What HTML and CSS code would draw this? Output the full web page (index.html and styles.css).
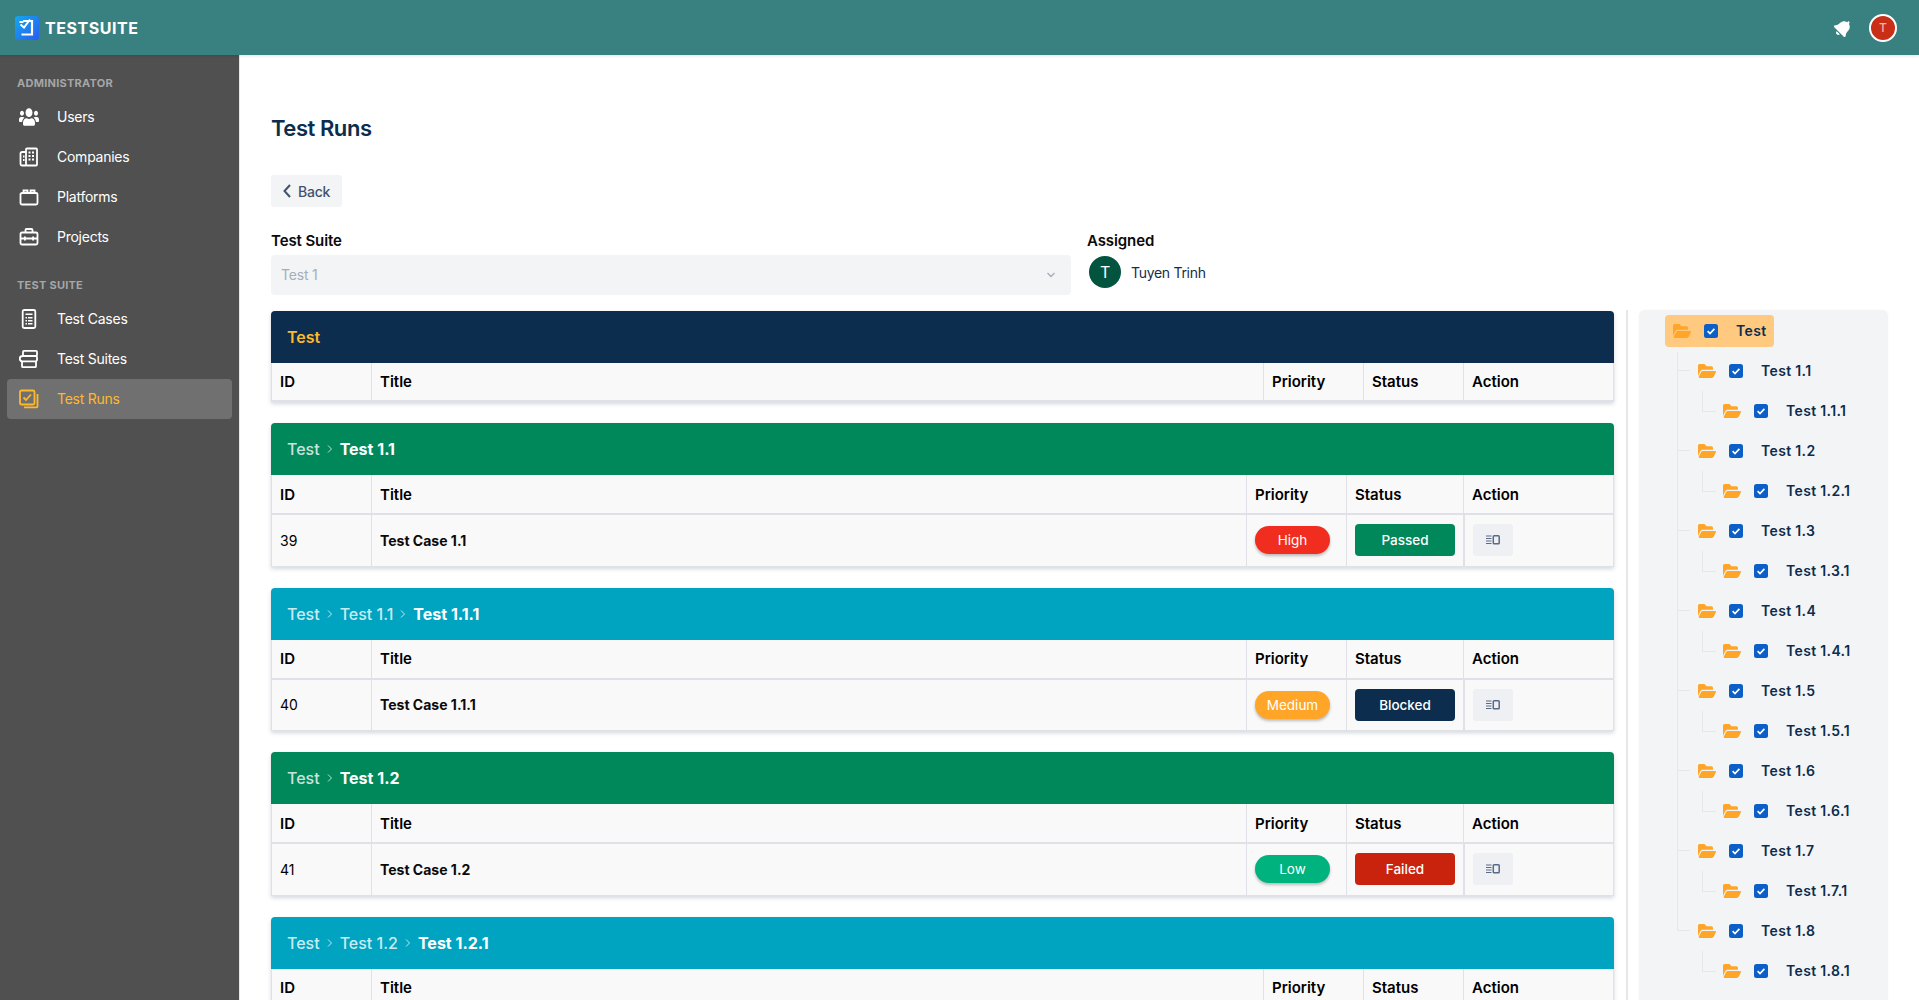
FILE: index.html
```html
<!DOCTYPE html>
<html lang="en">
<head>
<meta charset="utf-8">
<title>Test Runs</title>
<link rel="stylesheet" href="styles.css">
</head>
<body>
<svg class="defs" width="0" height="0">
  <defs>
    <symbol id="folder" viewBox="0 64 576 384" preserveAspectRatio="none"><path fill="currentColor" d="M572.694 292.093L500.27 416.248A63.997 63.997 0 0 1 444.989 448H45.025c-18.523 0-30.064-20.093-20.731-36.093l72.424-124.155A64 64 0 0 1 152 256h399.964c18.523 0 30.064 20.093 20.73 36.093zM152 224h328v-48c0-26.51-21.49-48-48-48H272l-64-64H48C21.49 64 0 85.49 0 112v278.046l69.077-118.418C86.214 242.25 117.989 224 152 224z"/></symbol>
    <symbol id="check" viewBox="0 0 14 14"><rect width="14" height="14" rx="2.5" fill="#0b5fc6"/><path d="M3.6 7.2l2.4 2.3 4.4-4.6" fill="none" stroke="#fff" stroke-width="1.7"/></symbol>
    <symbol id="panel" viewBox="0 0 14 10"><path d="M0 1h5.5M0 3.5h5.5M0 6h5.5M0 8.5h5.5" stroke="currentColor" stroke-width="1.1"/><rect x="7.3" y=".8" width="5.9" height="7.9" rx=".8" fill="none" stroke="currentColor" stroke-width="1.5"/></symbol>
    <symbol id="chev" viewBox="0 0 8 10"><path d="M2 1.500L5.500 5 2 8.500" fill="none" stroke="currentColor" stroke-width="1"/></symbol>
  </defs>
</svg>
<header class="topbar">
  <div class="brand">
    <svg class="logo" viewBox="0 0 24 24"><defs><linearGradient id="lg" x1="0" y1="0" x2="1" y2="1"><stop offset="0" stop-color="#13a8ef"/><stop offset="1" stop-color="#2a5cf0"/></linearGradient></defs><rect width="24" height="24" rx="3" fill="url(#lg)"/><path d="M8 5h9v13.500H6.500" fill="none" stroke="#fff" stroke-width="2.200"/><path d="M4.500 6h4M5.500 8.500l3.500 3 6-8" fill="none" stroke="#fff" stroke-width="2"/></svg>
    <span class="brand-name">TESTSUITE</span>
  </div>
  <div class="top-actions">
    <svg class="bell" viewBox="0 0 448 512"><path fill="#fff" d="M224 512c35.32 0 63.97-28.65 63.97-64H160.03c0 35.35 28.65 64 63.97 64zm215.39-149.71c-19.32-20.76-55.47-51.99-55.47-154.29 0-77.7-54.48-139.9-127.94-155.16V32c0-17.67-14.32-32-31.98-32s-31.98 14.33-31.98 32v20.84C118.56 68.1 64.08 130.3 64.08 208c0 102.3-36.15 133.53-55.47 154.29-6 6.45-8.66 14.16-8.61 21.71.11 16.4 12.98 32 32.1 32h383.8c19.12 0 32-15.6 32.1-32 .05-7.55-2.61-15.27-8.61-21.71z"/></svg>
    <div class="me">T</div>
  </div>
</header>
<div class="shell">
  <aside class="sidebar">
    <div class="nav-title">Administrator</div>
    <a class="nav-item"><svg class="nav-icon nav-icon-users" viewBox="0 25 640 460" preserveAspectRatio="none"><path fill="currentColor" d="M96 224c35.300 0 64-28.700 64-64s-28.700-64-64-64-64 28.700-64 64 28.700 64 64 64zm448 0c35.300 0 64-28.700 64-64s-28.700-64-64-64-64 28.700-64 64 28.700 64 64 64zm32 32h-64c-17.600 0-33.500 7.100-45.100 18.600 40.300 22.100 68.900 62 75.100 109.400h66c17.700 0 32-14.300 32-32v-32c0-35.300-28.700-64-64-64zm-256 0c61.900 0 112-50.100 112-112S381.900 32 320 32 208 82.100 208 144s50.100 112 112 112zm76.800 32h-8.300c-20.800 10-43.900 16-68.500 16s-47.600-6-68.500-16h-8.300C179.600 288 128 339.600 128 403.200V432c0 26.500 21.500 48 48 48h288c26.500 0 48-21.500 48-48v-28.800c0-63.600-51.600-115.200-115.200-115.200zm-223.700-13.400C161.500 263.100 145.600 256 128 256H64c-35.300 0-64 28.700-64 64v32c0 17.700 14.300 32 32 32h65.900c6.300-47.400 34.900-87.300 75.200-109.400z"/></svg>Users</a>
    <a class="nav-item"><svg class="nav-icon" viewBox="0 0 20 20"><g fill="none" stroke="currentColor" stroke-width="1.800"><rect x="7" y="1.500" width="11" height="17" rx="1"/><path d="M7 5H3a1.500 1.500 0 0 0-1.500 1.500V17A1.500 1.500 0 0 0 3 18.500h4"/></g><path d="M9.500 4.500h2v2h-2zM13 4.500h2v2h-2zM9.500 8h2v2h-2zM13 8h2v2h-2zM9.500 11.500h2v2h-2zM13 11.500h2v2h-2zM4 8.500h1.500v2H4zM4 12h1.500v2H4z" fill="currentColor"/></svg>Companies</a>
    <a class="nav-item"><svg class="nav-icon" viewBox="0 0 20 20"><g fill="none" stroke="currentColor" stroke-width="1.800"><rect x="1.500" y="6" width="17" height="11.500" rx="1.500"/><path d="M4.500 6V3.500h4V6M11.500 6V3.500h4V6"/></g></svg>Platforms</a>
    <a class="nav-item"><svg class="nav-icon" viewBox="0 0 20 20"><g fill="none" stroke="currentColor" stroke-width="1.800"><rect x="1.500" y="5.500" width="17" height="12" rx="1.500"/><path d="M6.500 5.500V3a1 1 0 0 1 1-1h5a1 1 0 0 1 1 1v2.500M1.500 11.500h4M14.500 11.500h4M6 11.500h8"/></g><path d="M5 9.500h1.800v4H5zM13.200 9.500H15v4h-1.800z" fill="currentColor"/></svg>Projects</a>
    <div class="nav-title nav-title-second">Test Suite</div>
    <a class="nav-item"><svg class="nav-icon" viewBox="0 0 20 20"><rect x="3.700" y="1" width="12.600" height="18" rx="1.500" fill="none" stroke="currentColor" stroke-width="1.800"/><path d="M6.500 4.500h7v1.500h-7zM6.500 8h1.500v1.500H6.500zM9 8h4.500v1.500H9zM6.500 11h1.500v1.500H6.500zM9 11h4.500v1.500H9zM6.500 14h1.500v1.500H6.500zM9 14h4.500v1.500H9z" fill="currentColor"/></svg>Test Cases</a>
    <a class="nav-item"><svg class="nav-icon" viewBox="0 0 20 20"><g fill="none" stroke="currentColor" stroke-width="1.800"><path d="M4 7V2.800a1 1 0 0 1 1-1h12a1 1 0 0 1 1 1V6a1 1 0 0 1-1 1"/><path d="M17.500 7H3.500a2.700 2.700 0 0 0 0 5.400h14M17 7a2.700 2.700 0 0 1 1 2.700 2.700 2.700 0 0 1-1 2.700"/><path d="M3 12.400v4.800a1 1 0 0 0 1 1h12a1 1 0 0 0 1-1v-4.800"/></g></svg>Test Suites</a>
    <a class="nav-item nav-item-active"><svg class="nav-icon" viewBox="0 0 20 20"><g fill="none" stroke="currentColor" stroke-width="1.800"><rect x="1" y="1.500" width="14.500" height="14" rx="1.500"/><path d="M18.500 5v12.300a1 1 0 0 1-1 1H5"/><path d="M4.500 8.500l2.500 2.500 5-5.500"/></g></svg>Test Runs</a>
  </aside>
  <main class="content">
    <h1 class="page-title">Test Runs</h1>
    <a class="back"><svg class="back-icon" viewBox="0 0 10 16"><path d="M8 2L2.500 8 8 14" fill="none" stroke="currentColor" stroke-width="2"/></svg>Back</a>
    <div class="fields">
      <div class="field-suite">
        <div class="field-label">Test Suite</div>
        <div class="select"><span>Test 1</span><svg class="select-chev" viewBox="0 0 10 6"><path d="M1.500 1L5 4.500 8.500 1" fill="none" stroke="currentColor" stroke-width="1.400"/></svg></div>
      </div>
      <div class="field-assigned">
        <div class="field-label">Assigned</div>
        <div class="assignee"><span class="avatar">T</span><span>Tuyen Trinh</span></div>
      </div>
    </div>
    <div class="split">
      <div class="tables">
        <section class="block">
          <div class="block-head head-navy"><span class="crumb-only">Test</span></div>
          <table class="grid grid-wide">
            <colgroup><col class="c-id"><col><col class="c-pri"><col class="c-sta-w"><col class="c-act"></colgroup>
            <thead><tr><th>ID</th><th>Title</th><th>Priority</th><th>Status</th><th>Action</th></tr></thead>
          </table>
        </section>
        <section class="block">
          <div class="block-head head-green"><span class="crumb">Test</span><svg class="sep"><use href="#chev"/></svg><span class="crumb-now">Test 1.1</span></div>
          <table class="grid">
            <colgroup><col class="c-id"><col><col class="c-pri"><col class="c-sta"><col class="c-act"></colgroup>
            <thead><tr><th>ID</th><th>Title</th><th>Priority</th><th>Status</th><th>Action</th></tr></thead>
            <tbody><tr><td>39</td><td class="case">Test Case 1.1</td><td><span class="pill pill-high">High</span></td><td><span class="state state-pass">Passed</span></td><td class="act"><span class="act-btn"><svg class="act-icon"><use href="#panel"/></svg></span></td></tr></tbody>
          </table>
        </section>
        <section class="block">
          <div class="block-head head-cyan"><span class="crumb">Test</span><svg class="sep"><use href="#chev"/></svg><span class="crumb">Test 1.1</span><svg class="sep"><use href="#chev"/></svg><span class="crumb-now">Test 1.1.1</span></div>
          <table class="grid">
            <colgroup><col class="c-id"><col><col class="c-pri"><col class="c-sta"><col class="c-act"></colgroup>
            <thead><tr><th>ID</th><th>Title</th><th>Priority</th><th>Status</th><th>Action</th></tr></thead>
            <tbody><tr><td>40</td><td class="case">Test Case 1.1.1</td><td><span class="pill pill-med">Medium</span></td><td><span class="state state-block">Blocked</span></td><td class="act"><span class="act-btn"><svg class="act-icon"><use href="#panel"/></svg></span></td></tr></tbody>
          </table>
        </section>
        <section class="block">
          <div class="block-head head-green"><span class="crumb">Test</span><svg class="sep"><use href="#chev"/></svg><span class="crumb-now">Test 1.2</span></div>
          <table class="grid">
            <colgroup><col class="c-id"><col><col class="c-pri"><col class="c-sta"><col class="c-act"></colgroup>
            <thead><tr><th>ID</th><th>Title</th><th>Priority</th><th>Status</th><th>Action</th></tr></thead>
            <tbody><tr><td>41</td><td class="case">Test Case 1.2</td><td><span class="pill pill-low">Low</span></td><td><span class="state state-fail">Failed</span></td><td class="act"><span class="act-btn"><svg class="act-icon"><use href="#panel"/></svg></span></td></tr></tbody>
          </table>
        </section>
        <section class="block">
          <div class="block-head head-cyan"><span class="crumb">Test</span><svg class="sep"><use href="#chev"/></svg><span class="crumb">Test 1.2</span><svg class="sep"><use href="#chev"/></svg><span class="crumb-now">Test 1.2.1</span></div>
          <table class="grid grid-wide">
            <colgroup><col class="c-id"><col><col class="c-pri"><col class="c-sta-w"><col class="c-act"></colgroup>
            <thead><tr><th>ID</th><th>Title</th><th>Priority</th><th>Status</th><th>Action</th></tr></thead>
          </table>
        </section>
      </div>
      <aside class="tree-wrap">
        <div class="tree">
          <div class="node node-selected"><svg class="folder"><use href="#folder"/></svg><svg class="box"><use href="#check"/></svg><span>Test</span></div>
          <div class="node lvl1"><svg class="folder"><use href="#folder"/></svg><svg class="box"><use href="#check"/></svg><span>Test 1.1</span></div>
          <div class="node lvl2"><svg class="folder"><use href="#folder"/></svg><svg class="box"><use href="#check"/></svg><span>Test 1.1.1</span></div>
          <div class="node lvl1"><svg class="folder"><use href="#folder"/></svg><svg class="box"><use href="#check"/></svg><span>Test 1.2</span></div>
          <div class="node lvl2"><svg class="folder"><use href="#folder"/></svg><svg class="box"><use href="#check"/></svg><span>Test 1.2.1</span></div>
          <div class="node lvl1"><svg class="folder"><use href="#folder"/></svg><svg class="box"><use href="#check"/></svg><span>Test 1.3</span></div>
          <div class="node lvl2"><svg class="folder"><use href="#folder"/></svg><svg class="box"><use href="#check"/></svg><span>Test 1.3.1</span></div>
          <div class="node lvl1"><svg class="folder"><use href="#folder"/></svg><svg class="box"><use href="#check"/></svg><span>Test 1.4</span></div>
          <div class="node lvl2"><svg class="folder"><use href="#folder"/></svg><svg class="box"><use href="#check"/></svg><span>Test 1.4.1</span></div>
          <div class="node lvl1"><svg class="folder"><use href="#folder"/></svg><svg class="box"><use href="#check"/></svg><span>Test 1.5</span></div>
          <div class="node lvl2"><svg class="folder"><use href="#folder"/></svg><svg class="box"><use href="#check"/></svg><span>Test 1.5.1</span></div>
          <div class="node lvl1"><svg class="folder"><use href="#folder"/></svg><svg class="box"><use href="#check"/></svg><span>Test 1.6</span></div>
          <div class="node lvl2"><svg class="folder"><use href="#folder"/></svg><svg class="box"><use href="#check"/></svg><span>Test 1.6.1</span></div>
          <div class="node lvl1"><svg class="folder"><use href="#folder"/></svg><svg class="box"><use href="#check"/></svg><span>Test 1.7</span></div>
          <div class="node lvl2"><svg class="folder"><use href="#folder"/></svg><svg class="box"><use href="#check"/></svg><span>Test 1.7.1</span></div>
          <div class="node lvl1"><svg class="folder"><use href="#folder"/></svg><svg class="box"><use href="#check"/></svg><span>Test 1.8</span></div>
          <div class="node lvl2"><svg class="folder"><use href="#folder"/></svg><svg class="box"><use href="#check"/></svg><span>Test 1.8.1</span></div>
        </div>
      </aside>
    </div>
  </main>
</div>
</body>
</html>
```
FILE: styles.css
```css
* { box-sizing: border-box; }
html, body { margin: 0; height: 100%; overflow: hidden; }
body { font-family: Inter, "Liberation Sans", sans-serif; font-size: 14px; color: #000; background: #fff; display: flex; flex-direction: column; height: 1000px; }
.defs { position: absolute; }

.topbar { height: 55px; flex: none; background: #398181; display: flex; align-items: center; justify-content: space-between; padding: 0 22px 0 15px; box-shadow: 0 1px 3px rgba(0,0,0,.12); position: relative; z-index: 2; }
.brand { display: flex; align-items: center; gap: 6px; }
.logo { width: 24px; height: 24px; }
.brand-name { color: #fff; font-weight: 700; font-size: 16px; letter-spacing: .55px; }
.top-actions { display: flex; align-items: center; gap: 18px; }
.bell { width: 16px; height: 18px; transform: rotate(45deg); }
.me { width: 28px; height: 28px; border-radius: 50%; background: #c92e17; border: 2px solid #fff; color: #f5b5a8; font-size: 12px; font-weight: 500; display: flex; align-items: center; justify-content: center; }

.shell { flex: 1; display: flex; min-height: 0; }
.sidebar { width: 240px; flex: none; background: #505050; border-right: 1px solid #e5e7eb; padding: 21px 7px 0; }
.nav-title { color: #a6a6a6; font-size: 11px; font-weight: 700; text-transform: uppercase; letter-spacing: .25px; height: 14px; line-height: 14px; padding-left: 10px; margin-bottom: 7px; }
.nav-title-second { margin-top: 21px; }
.nav-item { display: flex; align-items: center; height: 40px; color: #fff; font-size: 14px; font-weight: 400; letter-spacing: -.25px; border-radius: 4px; padding: 0 0 1px 12px; }
.nav-icon { width: 20px; height: 20px; margin-right: 18px; flex: none; }
.nav-icon-users { height: 18px; }
.nav-item-active { background: #707070; color: #fdb92e; }

.content { flex: 1; min-width: 0; padding: 0 31px 0 31px; overflow: hidden; }
.page-title { margin: 57px 0 0; font-size: 22px; line-height: 32px; letter-spacing: -.45px; font-weight: 600; color: #0c2d4e; height: 32px; }
.back { margin-top: 31px; width: 71px; height: 32px; background: #f3f4f6; border-radius: 3px; display: flex; align-items: center; padding-left: 11px; color: #42526e; font-size: 14px; font-weight: 500; letter-spacing: -.2px; }
.back-icon { width: 10px; height: 16px; margin-right: 6px; }
.fields { margin-top: 25px; display: flex; gap: 16px; }
.field-suite { width: 800px; }
.field-label { font-size: 15px; line-height: 18px; font-weight: 600; letter-spacing: -.1px; color: #0a0a0a; height: 23px; }
.select { height: 40px; background: #f3f4f6; border-radius: 4px; color: #a6adbb; padding: 0 15px 1px 10px; display: flex; align-items: center; justify-content: space-between; font-size: 14px; letter-spacing: -.2px; }
.select-chev { width: 10px; height: 6px; color: #a6adbb; }
.assignee { display: flex; align-items: center; gap: 10px; color: #172b4d; font-size: 14px; letter-spacing: -.3px; padding: 1px 0 0 2px; }
.avatar { width: 32px; height: 32px; border-radius: 50%; background: #03543f; color: #fff; font-size: 16px; display: flex; align-items: center; justify-content: center; }

.split { margin-top: 16px; display: flex; align-items: flex-start; }
.tables { width: 1343px; flex: none; }
.block { border-radius: 4px 4px 0 0; margin-bottom: 21px; box-shadow: 0 2px 4px rgba(40,60,90,.2); }
.block-head { height: 52px; border-radius: 4px 4px 0 0; display: flex; align-items: center; padding-left: 16px; font-size: 16px; font-weight: 700; color: #fff; }
.head-navy { background: #0c2d4e; }
.head-green { background: #00875a; }
.head-cyan { background: #00a4c0; }
.crumb-only { color: #fdb92e; font-weight: 600; }
.crumb { font-weight: 500; color: rgba(255,255,255,.8); }
.crumb-now { color: #fff; }
.sep { width: 8px; height: 10px; margin: 0 6px; color: rgba(255,255,255,.75); }

.grid { width: 100%; border-collapse: collapse; table-layout: fixed; background: #f9f9fa; }
.c-id { width: 100px; }
.c-pri { width: 100px; }
.c-sta { width: 117px; }
.c-sta-w { width: 100px; }
.c-act { width: 150px; }
.grid th { height: 39px; text-align: left; font-size: 15px; font-weight: 600; padding: 0 8px; border: 1px solid #dfe1e6; border-width: 0 1px 2px 1px; color: #000; }
.grid-wide th { height: 38px; }
.grid td { height: 52px; font-size: 14px; padding: 0 8px; border: 1px solid #dfe1e6; border-width: 0 1px 1px 1px; }
.grid td.case { font-weight: 700; font-size: 14px; color: #0a0a0a; }
.grid td.act { padding-left: 8px; border-left-width: 2px; }
.pill { display: flex; align-items: center; justify-content: center; width: 75px; height: 28px; border-radius: 14px; color: #fff; font-size: 13.500px; box-shadow: 0 2px 3px rgba(0,0,0,.25); }
.pill-high { background: #f02d1f; }
.pill-med { background: #ffa528; }
.pill-low { background: #00b37e; }
.state { display: flex; align-items: center; justify-content: center; width: 100px; height: 32px; border-radius: 4px; color: #fff; font-size: 13.500px; font-weight: 500; }
.state-pass { background: #00875a; }
.state-block { background: #0c2d4e; }
.state-fail { background: #c9230e; }
.act-btn { display: flex; align-items: center; justify-content: center; width: 40px; height: 32px; border-radius: 3px; background: #eff0f3; color: #5a6b88; }
.act-icon { width: 14px; height: 10px; }

.tree-wrap { margin: -1px 0 0 12px; padding-left: 11px; border-left: 2px solid #e5e7eb; height: 700px; flex: none; }
.tree { position: relative; width: 249px; height: 700px; background: #f3f4f6; border-radius: 6px 6px 0 0; box-shadow: 0 0 2px rgba(0,0,0,.05); padding: 5px 0 0 26px; }
.tree::before { content: ""; position: absolute; left: 38px; top: 42px; width: 1px; height: 579px; background: #e5e7eb; }
.node { position: relative; display: flex; align-items: center; height: 32px; margin-bottom: 8px; width: max-content; padding: 0 8px 1px; font-size: 14px; font-weight: 600; letter-spacing: .35px; color: #0c2d4e; border-radius: 4px; }
.node-selected { background: #ffc97f; }
.lvl1 { margin-left: 25px; }
.lvl2 { margin-left: 50px; }
.folder { width: 18px; height: 14px; color: #ffa528; margin-right: 13px; flex: none; }
.box { width: 14px; height: 14px; margin-right: 18px; flex: none; }
.lvl1::before { content: ""; position: absolute; left: -13px; top: 15px; width: 13px; height: 1px; background: #e5e7eb; }
.lvl2::before { content: ""; position: absolute; left: -13px; top: -4px; width: 13px; height: 20px; border-left: 1px solid #e5e7eb; border-bottom: 1px solid #e5e7eb; }
```
